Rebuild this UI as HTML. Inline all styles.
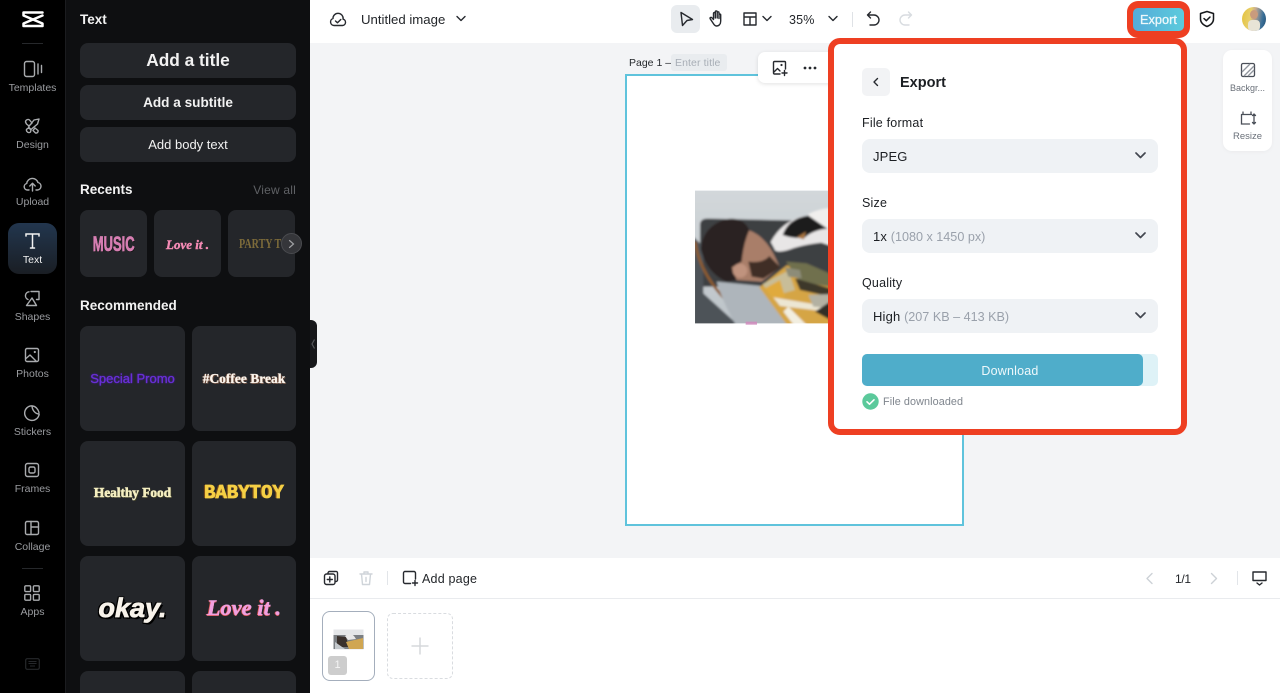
<!DOCTYPE html>
<html><head><meta charset="utf-8"><style>
*{box-sizing:border-box}
html,body{margin:0;padding:0;width:1280px;height:693px;overflow:hidden;background:#fff;font-family:"Liberation Sans",sans-serif}
#root{position:relative;width:1280px;height:693px;overflow:hidden;background:#fff}
.a{position:absolute}
.t{position:absolute;white-space:nowrap;line-height:1;margin-top:1px}
svg{position:absolute;overflow:visible}
.rl{position:absolute;left:0;width:65px;text-align:center;font-size:10.5px;color:#9a9ca0;line-height:12px;margin-top:1px}
.ri{fill:none;stroke:#a9abae;stroke-width:1.4;stroke-linecap:round;stroke-linejoin:round}
.btn{position:absolute;left:80px;width:216px;height:35px;background:#24262a;border-radius:8px;color:#f2f2f2;text-align:center;line-height:36px}
.tile{position:absolute;background:#24262a;border-radius:8px;overflow:hidden;text-align:center}
.sel{position:absolute;left:862px;width:296px;height:34px;background:#eff2f5;border-radius:8px;font-size:13px;line-height:35px;padding-left:11px;color:#1c1f23;letter-spacing:.15px}
.sel span{color:#9aa1ab;font-size:12.6px;letter-spacing:0}
.lab{position:absolute;left:862px;font-size:12.5px;line-height:14px;color:#1c1f23;letter-spacing:.2px;margin-top:1px}
.ic{fill:none;stroke:#26292e;stroke-width:1.4;stroke-linecap:round;stroke-linejoin:round}
</style></head><body><div id="root">

<!-- canvas -->
<div class="a" style="left:310px;top:43px;width:970px;height:515px;background:#f3f4f6"></div>
<div class="a" style="left:625px;top:74px;width:339px;height:452px;background:#fff;border:2px solid #5fc3dc"></div>
<div class="t" style="left:629px;top:57px;font-size:10.5px;color:#25282c">Page 1 –</div>
<div class="a" style="left:671px;top:54px;width:56px;height:17px;background:#e9ecef;border-radius:3px"></div>
<div class="t" style="left:675px;top:57px;font-size:10.5px;color:#a8aeb6;letter-spacing:.1px">Enter title</div>

<!-- photo -->
<svg style="left:680px;top:180px" width="160" height="150" viewBox="0 0 480 450">
<defs><filter id="b" x="-5%" y="-5%" width="110%" height="110%"><feGaussianBlur stdDeviation="3"/></filter><clipPath id="c"><rect x="45" y="32" width="400" height="398"/></clipPath>
<linearGradient id="w" x1="0" y1="0" x2="0" y2="1"><stop offset="0" stop-color="#d3d8db"/><stop offset="1" stop-color="#bcc3c8"/></linearGradient></defs>
<g clip-path="url(#c)"><g filter="url(#b)">
<rect x="30" y="20" width="430" height="420" fill="url(#w)"/>
<path d="M60 135Q60 115 85 116L470 124V320H60Z" fill="#3d3f42"/>
<path d="M40 170L70 200V340L180 440H40Z" fill="#4d5359"/>
<path d="M46 185C55 270 120 360 215 428" fill="none" stroke="#8d5c2f" stroke-width="8"/>
<path d="M110 305L245 318L335 440H170Q125 360 110 305Z" fill="#aeb5bb"/>
<path d="M385 102Q420 84 460 84V200L400 180Z" fill="#f0efed"/>
<path d="M272 186Q305 125 370 108L460 150V185Q380 190 330 208Q285 222 283 206Z" fill="#e8e6e6"/>
<path d="M308 165Q325 115 385 107L442 146Q400 150 375 172Q345 178 308 165Z" fill="#1c1a1e"/>
<path d="M350 172L378 155L372 178Z" fill="#a7743f"/>
<path d="M205 150Q250 165 280 220L300 262L245 305L170 300L150 260Z" fill="#a97e69"/>
<path d="M205 245Q250 250 268 228L302 262L250 296L215 290Z" fill="#3f2e25"/>
<path d="M62 205Q70 140 135 118Q190 108 208 150Q190 190 185 245L155 262L170 300L140 305Q80 280 62 205Z" fill="#2b2320"/>
<ellipse cx="180" cy="272" rx="22" ry="21" fill="#c0937e"/>
<path d="M238 322L320 256L470 290V440H325Z" fill="#d5a544"/>
<path d="M318 245L380 250L460 285V322L360 305Z" fill="#6f6f4e"/>
<path d="M248 312L325 272L345 330L275 350Z" fill="#c8bd98"/>
<path d="M255 325L300 300L315 350L285 362Z" fill="#e0aa3c"/>
<path d="M345 295L460 328V352L360 330Z" fill="#3d3829"/>
<path d="M280 352L460 382V397L300 378Z" fill="#ece6d3"/>
<path d="M385 345L460 342V385L400 380Z" fill="#b3b1a2"/>
<path d="M325 380L385 440H345L310 395Z" fill="#f2eee0"/>
<path d="M405 395L460 358V425Z" fill="#312d27"/>
<path d="M315 262L360 270L365 295L325 290Z" fill="#8d8c78"/>
</g></g>
<rect x="197" y="425" width="34" height="9" fill="#cf8abc" opacity=".85"/>
</svg>

<!-- floating toolbar -->
<div class="a" style="left:758px;top:52px;width:80px;height:31px;background:#fff;border-radius:7px;box-shadow:0 1px 4px rgba(0,0,0,.12)"></div>
<svg style="left:771px;top:59px" width="18" height="18" viewBox="0 0 18 18"><path class="ic" d="M9 15H3.500a1 1 0 0 1-1-1V3.500a1 1 0 0 1 1-1h10a1 1 0 0 1 1 1V10M3 13l3.500-3.500L9 12"/><circle cx="10.500" cy="6" r="1.100" fill="#26292e"/><path class="ic" d="M13.500 11.500v5M11 14h5"/></svg>
<svg style="left:802px;top:63px" width="16" height="10"><circle cx="3" cy="5" r="1.400" fill="#26292e"/><circle cx="8" cy="5" r="1.400" fill="#26292e"/><circle cx="13" cy="5" r="1.400" fill="#26292e"/></svg>

<!-- header -->
<div class="a" style="left:310px;top:0;width:970px;height:43px;background:#fff"></div>
<svg style="left:329px;top:10px" width="18" height="18" viewBox="0 0 18 18"><path class="ic" d="M5 15.500h8.500a3.200 3.200 0 0 0 .6-6.300A5.200 5.200 0 0 0 9 3.300 5 5 0 0 0 4 8.500a3.600 3.600 0 0 0 1 7ZM6.500 11l2 1.800 3.300-3.300"/></svg>
<div class="t" style="left:361px;top:12px;font-size:13.200px;color:#23262a">Untitled image</div>
<svg style="left:455px;top:14px" width="12" height="10"><path class="ic" d="M2 2.500l4 4 4-4"/></svg>
<div class="a" style="left:671px;top:5px;width:29px;height:28px;background:#e9ecef;border-radius:6px"></div>
<svg style="left:677px;top:10px" width="18" height="18" viewBox="0 0 18 18"><path class="ic" d="M4 2.500L15.500 9.500 10 10.500 5.500 15.500Z"/></svg>
<svg style="left:708px;top:9px" width="18" height="19" viewBox="0 0 18 19"><path class="ic" d="M5 14L2.200 9.800c-.6-1.200.9-2 1.700-1L5.500 10.500V4.500c0-1.300 1.800-1.300 1.800 0V9V2.900c0-1.300 1.900-1.300 1.900 0V9V3.800c0-1.300 1.800-1.300 1.800 0V9.500V6c0-1.200 1.700-1.200 1.700 0v6c0 3-1.700 5-4.300 5H8.500C7 17 6 15.700 5 14Z"/></svg>
<svg style="left:742px;top:11px" width="16" height="16" viewBox="0 0 16 16"><path class="ic" d="M2 2h12v12H2ZM2 6h12M8 6v8"/></svg>
<svg style="left:761px;top:14px" width="12" height="10"><path class="ic" d="M2 2.500l4 4 4-4"/></svg>
<div class="t" style="left:789px;top:13px;font-size:12.500px;color:#23262a;letter-spacing:.2px">35%</div>
<svg style="left:827px;top:14px" width="12" height="10"><path class="ic" d="M2 2.500l4 4 4-4"/></svg>
<div class="a" style="left:852px;top:12px;width:1px;height:15px;background:#dfe2e6"></div>
<svg style="left:865px;top:10px" width="17" height="18" viewBox="0 0 17 18"><path class="ic" d="M5.500 2L2.500 5l3 3M2.500 5H9a4.500 4.500 0 0 1 0 10H5"/></svg>
<svg style="left:897px;top:10px" width="17" height="18" viewBox="0 0 17 18"><path fill="none" stroke="#d8dce0" stroke-width="1.400" stroke-linecap="round" stroke-linejoin="round" d="M11.500 2l3 3-3 3M14.500 5H8a4.500 4.500 0 0 0 0 10h4"/></svg>

<!-- Export button -->
<div class="a" style="left:1127px;top:1px;width:63px;height:37px;background:#ee3f22;border-radius:11px"></div>
<div class="a" style="left:1133px;top:8px;width:51px;height:23px;background:linear-gradient(90deg,#55abd9,#5ccbdc);border-radius:5px;color:#eef8fb;font-size:12.800px;-webkit-text-stroke:.3px #eef8fb;text-align:center;line-height:24px">Export</div>
<svg style="left:1199px;top:10px" width="16" height="18" viewBox="0 0 16 18"><path fill="none" stroke="#17191c" stroke-width="1.500" stroke-linejoin="round" stroke-linecap="round" d="M8 1.500L14.500 3.500V9c0 3.500-2.800 6-6.500 7.500C4.300 15 1.500 12.500 1.500 9V3.500ZM5 8.500l2.300 2.200L11 7"/></svg>
<div class="a" style="left:1242px;top:7px;width:24px;height:24px;border-radius:50%;background:linear-gradient(100deg,#e3c23c 0%,#e8cf6b 35%,#c4a992 50%,#3a6f98 80%,#234e72 100%);overflow:hidden"><div class="a" style="left:8px;top:3px;width:8px;height:9px;border-radius:50%;background:#c99b7d"></div><div class="a" style="left:6px;top:13px;width:12px;height:11px;border-radius:4px;background:#e8e4d6"></div></div>

<!-- Right tools -->
<div class="a" style="left:1223px;top:50px;width:49px;height:101px;background:#fff;border-radius:9px;box-shadow:0 1px 4px rgba(0,0,0,.04)"></div>
<svg style="left:1240px;top:62px" width="16" height="16" viewBox="0 0 16 16"><rect x="1.500" y="1.500" width="13" height="13" rx="1.500" fill="none" stroke="#4a4f58" stroke-width="1.300"/><path d="M2 10L10 2M4 14L14 4M8 14L14 8" stroke="#8f949c" stroke-width="1.300"/></svg>
<div class="t" style="left:1223px;width:49px;text-align:center;top:83px;font-size:9px;color:#6a7079">Backgr...</div>
<svg style="left:1240px;top:111px" width="16" height="16" viewBox="0 0 16 16"><path fill="none" stroke="#4a4f58" stroke-width="1.300" stroke-linecap="round" d="M3 1v2M11 1v2M1.500 3.500h10M1.500 3.500v9.500h8M14 3v10M12.500 4.500L14 3l1.500 1.500M12.500 11.500L14 13l1.500-1.500"/></svg>
<div class="t" style="left:1223px;width:49px;text-align:center;top:131px;font-size:9.500px;color:#6a7079">Resize</div>

<!-- Export popup -->
<div class="a" style="left:828px;top:38px;width:359px;height:397px;background:#fff;border:6.500px solid #ee3f22;border-radius:12px"></div>
<div class="a" style="left:862px;top:68px;width:28px;height:28px;background:#f2f3f5;border-radius:5px"></div>
<svg style="left:871px;top:77px" width="10" height="10"><path class="ic" stroke-width="1.600" d="M6.500 1.500L3 5l3.500 3.500"/></svg>
<div class="t" style="left:900px;top:75px;font-size:14.500px;font-weight:bold;color:#1c1f23">Export</div>
<div class="lab" style="top:115px">File format</div>
<div class="sel" style="top:139px">JPEG</div>
<div class="lab" style="top:195px">Size</div>
<div class="sel" style="top:219px">1x <span>(1080 x 1450 px)</span></div>
<div class="lab" style="top:275px">Quality</div>
<div class="sel" style="top:299px">High <span>(207 KB – 413 KB)</span></div>
<svg style="left:1134px;top:151px" width="13" height="10"><path fill="none" stroke="#434750" stroke-width="1.700" stroke-linecap="round" stroke-linejoin="round" d="M2 2l4.500 4.500L11 2"/></svg>
<svg style="left:1134px;top:231px" width="13" height="10"><path fill="none" stroke="#434750" stroke-width="1.700" stroke-linecap="round" stroke-linejoin="round" d="M2 2l4.500 4.500L11 2"/></svg>
<svg style="left:1134px;top:311px" width="13" height="10"><path fill="none" stroke="#434750" stroke-width="1.700" stroke-linecap="round" stroke-linejoin="round" d="M2 2l4.500 4.500L11 2"/></svg>
<div class="a" style="left:862px;top:354px;width:296px;height:32px;background:#def2f7;border-radius:5px"></div>
<div class="a" style="left:862px;top:354px;width:281px;height:32px;background:#4fadca;border-radius:5px"></div>
<div class="t" style="left:862px;width:296px;text-align:center;top:364px;font-size:12.500px;color:#eef8fb;letter-spacing:.2px">Download</div>
<svg style="left:862px;top:393px" width="17" height="17"><circle cx="8.500" cy="8.500" r="8.200" fill="#5bc99b"/><path d="M5 8.800l2.500 2.400 4.500-4.400" fill="none" stroke="#fff" stroke-width="1.600" stroke-linecap="round" stroke-linejoin="round"/></svg>
<div class="t" style="left:883px;top:396px;font-size:10.800px;color:#7f858d;letter-spacing:.1px">File downloaded</div>

<!-- bottom -->
<div class="a" style="left:310px;top:558px;width:970px;height:135px;background:#fff"></div>
<div class="a" style="left:310px;top:598px;width:970px;height:1px;background:#e9ebee"></div>
<svg style="left:323px;top:570px" width="16" height="16" viewBox="0 0 16 16"><path class="ic" d="M5 3.500V3a1.500 1.500 0 0 1 1.500-1.500h6A1.500 1.500 0 0 1 14.500 3v7a1.500 1.500 0 0 1-1.500 1.500"/><rect class="ic" x="1.500" y="4" width="10.500" height="10.500" rx="2"/><path class="ic" d="M6.800 7v5M4.300 9.500h5"/></svg>
<svg style="left:358px;top:570px" width="16" height="16" viewBox="0 0 16 16"><path fill="none" stroke="#cfd4d9" stroke-width="1.400" stroke-linecap="round" stroke-linejoin="round" d="M2 4h12M6 4V2h4v2M3.500 4l1 10.500h7L12.500 4M8 7.500v4"/></svg>
<div class="a" style="left:387px;top:571px;width:1px;height:14px;background:#e2e5e9"></div>
<svg style="left:402px;top:570px" width="16" height="16" viewBox="0 0 16 16"><path class="ic" d="M8.500 13.500H3A1.500 1.500 0 0 1 1.500 12V3A1.500 1.500 0 0 1 3 1.500h9A1.500 1.500 0 0 1 13.500 3v6M13 10.500v5M10.500 13h5"/></svg>
<div class="t" style="left:422px;top:572px;font-size:12.500px;color:#23262a;letter-spacing:.2px">Add page</div>

<svg style="left:1144px;top:572px" width="12" height="13"><path fill="none" stroke="#ccd1d6" stroke-width="1.400" stroke-linecap="round" stroke-linejoin="round" d="M8 1.500L3 6.500l5 5"/></svg>
<div class="t" style="left:1175px;top:572px;font-size:12px;color:#23262a;letter-spacing:-.3px">1/1</div>
<svg style="left:1208px;top:572px" width="12" height="13"><path fill="none" stroke="#ccd1d6" stroke-width="1.400" stroke-linecap="round" stroke-linejoin="round" d="M3.500 1.500l5 5-5 5"/></svg>
<div class="a" style="left:1237px;top:571px;width:1px;height:14px;background:#e2e5e9"></div>
<svg style="left:1252px;top:571px" width="15" height="15" viewBox="0 0 15 15"><path class="ic" d="M1 1h13v8.500H1ZM5 12l2.500 2 2.500-2"/></svg>

<div class="a" style="left:322px;top:611px;width:53px;height:70px;border:1.500px solid #a4aebc;border-radius:8px;background:#fff;box-shadow:inset 0 0 0 1px #fff"></div>
<svg style="left:333px;top:629px" width="31" height="21" viewBox="0 0 31 21"><rect x="0.500" y="0.500" width="30" height="20" fill="#e4e6e8"/><rect x="0.500" y="6" width="30" height="14" fill="#7b7f83"/><path d="M4 7l9 1 3 10H4Z" fill="#3a312c"/><path d="M12 7q5-4 9 0l2 3-8 1Z" fill="#e8e8e8"/><path d="M13 13l17-4v11H16Z" fill="#d0a652"/><path d="M2 13l10 7H2Z" fill="#c3c8cc"/></svg>
<div class="a" style="left:328px;top:656px;width:19px;height:19px;background:#cdcdcd;border-radius:3px;color:#f4f4f4;font-size:11px;text-align:center;line-height:19px">1</div>
<div class="a" style="left:387px;top:613px;width:66px;height:66px;border:1px dashed #d9dce0;border-radius:6px"></div>
<svg style="left:411px;top:637px" width="18" height="18"><path d="M9 0.500v17M0.500 9h17" stroke="#d5d8dc" stroke-width="1.500"/></svg>

<!-- panel -->
<div class="a" style="left:66px;top:0;width:244px;height:693px;background:#0e0f11"></div>
<div class="a" style="left:310px;top:320px;width:7px;height:48px;background:#17181b;border-radius:0 6px 6px 0"></div>
<svg style="left:310px;top:338px" width="6" height="12"><path d="M4.500 1.500L2 6l2.500 4.500" fill="none" stroke="#55575b" stroke-width="1.200"/></svg>

<div class="t" style="left:80px;top:12px;font-size:13.500px;font-weight:bold;color:#f2f2f2">Text</div>
<div class="btn" style="top:43px;font-size:17.300px;font-weight:bold;line-height:35px">Add a title</div>
<div class="btn" style="top:85px;font-size:13.600px;font-weight:bold">Add a subtitle</div>
<div class="btn" style="top:127px;font-size:13px">Add body text</div>
<div class="t" style="left:80px;top:182px;font-size:13.500px;font-weight:bold;color:#f2f2f2">Recents</div>
<div class="t" style="right:984px;top:183px;font-size:12px;color:#5f6165;letter-spacing:.2px">View all</div>

<div class="tile" style="left:80px;top:210px;width:67px;height:67px"><div class="t" style="left:0;width:67px;top:23px;font-size:21px;font-weight:bold;color:#d77fb3;transform:scaleX(.62);-webkit-text-stroke:.7px #d77fb3;text-shadow:1px 1px 0 #111">MUSIC</div></div>
<div class="tile" style="left:154px;top:210px;width:67px;height:67px"><div class="t" style="left:0;width:67px;top:27px;font-family:'Liberation Serif',serif;font-weight:bold;font-style:italic;font-size:13px;color:#f58bb5;-webkit-text-stroke:.4px #f58bb5">Love it .</div></div>
<div class="tile" style="left:228px;top:210px;width:67px;height:67px"><div class="t" style="left:-2px;width:87px;top:27px;font-family:'Liberation Serif',serif;font-weight:bold;font-size:14px;color:#7d6b3a;transform:scaleX(.72);transform-origin:0 0;text-align:left;padding-left:18px">PARTY TODAY</div></div>
<div class="a" style="left:281px;top:233px;width:21px;height:21px;border-radius:50%;background:#35363a;border:1px solid #4a4b4f"></div>
<svg style="left:287px;top:239px" width="9" height="10"><path d="M2.500 1.500L6.500 5l-4 3.500" fill="none" stroke="#a0a1a4" stroke-width="1.200" stroke-linecap="round"/></svg>

<div class="t" style="left:80px;top:298px;font-size:13.500px;font-weight:bold;color:#f2f2f2">Recommended</div>

<div class="tile" style="left:80px;top:326px;width:105px;height:105px"><div class="t" style="left:0;width:105px;top:45px;font-size:13px;color:#6a2fd8;-webkit-text-stroke:.3px #6a2fd8;text-shadow:0 0 2px #4a1fb0">Special Promo</div></div>
<div class="tile" style="left:192px;top:326px;width:104px;height:105px"><div class="t" style="left:0;width:104px;top:45px;font-family:'Liberation Serif',serif;font-weight:bold;font-size:13.500px;color:#fbf4ec;-webkit-text-stroke:.3px #fbf4ec;text-shadow:1px 1px 0 #6b4a3a,-1px 0 0 #6b4a3a">#Coffee Break</div></div>
<div class="tile" style="left:80px;top:441px;width:105px;height:105px"><div class="t" style="left:0;width:105px;top:44px;font-family:'Liberation Serif',serif;font-weight:bold;font-size:13.300px;color:#f4eec0;-webkit-text-stroke:.6px #f4eec0;text-shadow:1px 1px 0 #3b3a22">Healthy Food</div></div>
<div class="tile" style="left:192px;top:441px;width:104px;height:105px"><div class="t" style="left:0;width:104px;top:42px;font-family:'Liberation Mono',monospace;font-weight:bold;font-size:19px;color:#f5cf45;-webkit-text-stroke:.7px #f5cf45;text-shadow:-1.500px 0 0 #7a4c1a">BABYTOY</div></div>
<div class="tile" style="left:80px;top:556px;width:105px;height:105px"><div class="t" style="left:0;width:105px;top:38px;font-weight:bold;font-style:italic;font-size:27px;color:#f7f2ea;-webkit-text-stroke:.8px #f7f2ea;text-shadow:2px 2px 0 #000,-1.500px -1px 0 #000,1.500px -1px 0 #000,-1.500px 1.500px 0 #000">okay.</div></div>
<div class="tile" style="left:192px;top:556px;width:104px;height:105px"><div class="t" style="left:0;width:104px;top:40px;font-family:'Liberation Serif',serif;font-weight:bold;font-style:italic;font-size:22.500px;color:#f0a0e0;-webkit-text-stroke:.4px #f0a0e0;text-shadow:-1px 0 0 #d9534f,0 1px 0 #d9534f">Love it .</div></div>
<div class="tile" style="left:80px;top:671px;width:105px;height:22px;border-radius:8px 8px 0 0"></div>
<div class="tile" style="left:192px;top:671px;width:104px;height:22px;border-radius:8px 8px 0 0"></div>

<!-- rail -->
<div class="a" style="left:0;top:0;width:65px;height:693px;background:#000"></div>
<div class="a" style="left:65px;top:0;width:1px;height:693px;background:#1b1c1f"></div>
<svg style="left:21px;top:10px" width="23" height="19" viewBox="0 0 23 19"><path d="M21.500 2.500H2.500V5.500L21.500 13.500V16H2.500V13.500L21.500 5.500" fill="none" stroke="#fff" stroke-width="2.500" stroke-linejoin="round" stroke-linecap="round"/></svg>
<div class="a" style="left:22px;top:43px;width:21px;height:1px;background:#26282b"></div>
<div class="a" style="left:22px;top:568px;width:21px;height:1px;background:#26282b"></div>

<svg style="left:23px;top:60px" width="20" height="18" viewBox="0 0 20 18"><rect class="ri" x="1.500" y="1.500" width="10" height="15" rx="2"/><path class="ri" d="M15 4v10M18.500 5.500v7"/></svg>
<div class="rl" style="top:81px">Templates</div>
<svg style="left:24px;top:118px" width="16" height="16" viewBox="0 0 16 16"><path class="ri" d="M1.500 4A2.500 2.500 0 0 1 6 2.500L8 5 5 8 2.500 6ZM15 1L10 2 4.500 9 7 11.500 13.500 6ZM3.500 10.500l1.500-.5 2 2-.5 2a2.500 2.500 0 0 1-4-2.500ZM11 10l3 2.500a2 2 0 0 1-2.500 2.500L9 12.500Z"/></svg>
<div class="rl" style="top:138px">Design</div>
<svg style="left:23px;top:175px" width="19" height="17" viewBox="0 0 19 17"><path class="ri" d="M6 15H4.500a3.300 3.300 0 0 1-.8-6.500A5.800 5.800 0 0 1 15 7.500 3.800 3.800 0 0 1 14.500 15H13M9.500 16V8.500M6.800 11l2.700-2.700 2.700 2.700"/></svg>
<div class="rl" style="top:195px">Upload</div>

<div class="a" style="left:8px;top:223px;width:49px;height:51px;border-radius:11px;background:linear-gradient(180deg,#22364e 0%,#1a1e24 100%)"></div>
<svg style="left:24px;top:232px" width="17" height="17" viewBox="0 0 17 17"><path fill="none" stroke="#f2f2f2" stroke-width="1.500" stroke-linecap="round" d="M2 4V2h13v2M8.500 2v14M6.500 16h4"/></svg>
<div class="rl" style="top:253px;color:#f0f0f0">Text</div>

<svg style="left:23px;top:290px" width="18" height="17" viewBox="0 0 18 17"><path class="ri" d="M5 9.500A4 4 0 0 1 6 1.800M8 1.500h8v8h-2.500M9 8l4.500 7.500H3.500Z"/></svg>
<div class="rl" style="top:310px">Shapes</div>
<svg style="left:24px;top:347px" width="16" height="16" viewBox="0 0 16 16"><rect class="ri" x="1.500" y="1.500" width="13" height="13" rx="1.500"/><path class="ri" d="M2 11.500l4-3.500 6 6"/><circle cx="10.800" cy="5" r="1.100" fill="#a9abae"/></svg>
<div class="rl" style="top:367px">Photos</div>
<svg style="left:24px;top:405px" width="16" height="16" viewBox="0 0 16 16"><path class="ri" d="M8 .8A7.300 7.300 0 1 0 15.200 9C11 9 8.200 5 8 .8ZM8.500 1c3 .3 5.500 3 6.500 6.500"/></svg>
<div class="rl" style="top:425px">Stickers</div>
<svg style="left:24px;top:462px" width="16" height="16" viewBox="0 0 16 16"><rect class="ri" x="1.500" y="1.500" width="13" height="13" rx="2"/><rect class="ri" x="5" y="5" width="6" height="6" rx="1.500"/></svg>
<div class="rl" style="top:482px">Frames</div>
<svg style="left:24px;top:520px" width="16" height="16" viewBox="0 0 16 16"><rect class="ri" x="1.500" y="1.500" width="13" height="13" rx="1.500"/><path class="ri" d="M7 1.500v13M7 7h7.500"/></svg>
<div class="rl" style="top:540px">Collage</div>
<svg style="left:24px;top:585px" width="16" height="16" viewBox="0 0 16 16"><rect class="ri" x=".8" y=".8" width="5.800" height="5.800" rx="1"/><rect class="ri" x="9.400" y=".8" width="5.800" height="5.800" rx="1"/><rect class="ri" x=".8" y="9.400" width="5.800" height="5.800" rx="1"/><rect class="ri" x="9.400" y="9.400" width="5.800" height="5.800" rx="1"/></svg>
<div class="rl" style="top:605px">Apps</div>
<svg style="left:25px;top:658px" width="15" height="12" viewBox="0 0 15 12"><rect x=".7" y=".7" width="13.600" height="10.600" rx="1.500" fill="none" stroke="#26282b" stroke-width="1.200"/><path d="M3.500 3.500h8M3.500 5.500h8M5 8h5" stroke="#26282b" stroke-width="1.100"/></svg>
</div></body></html>
